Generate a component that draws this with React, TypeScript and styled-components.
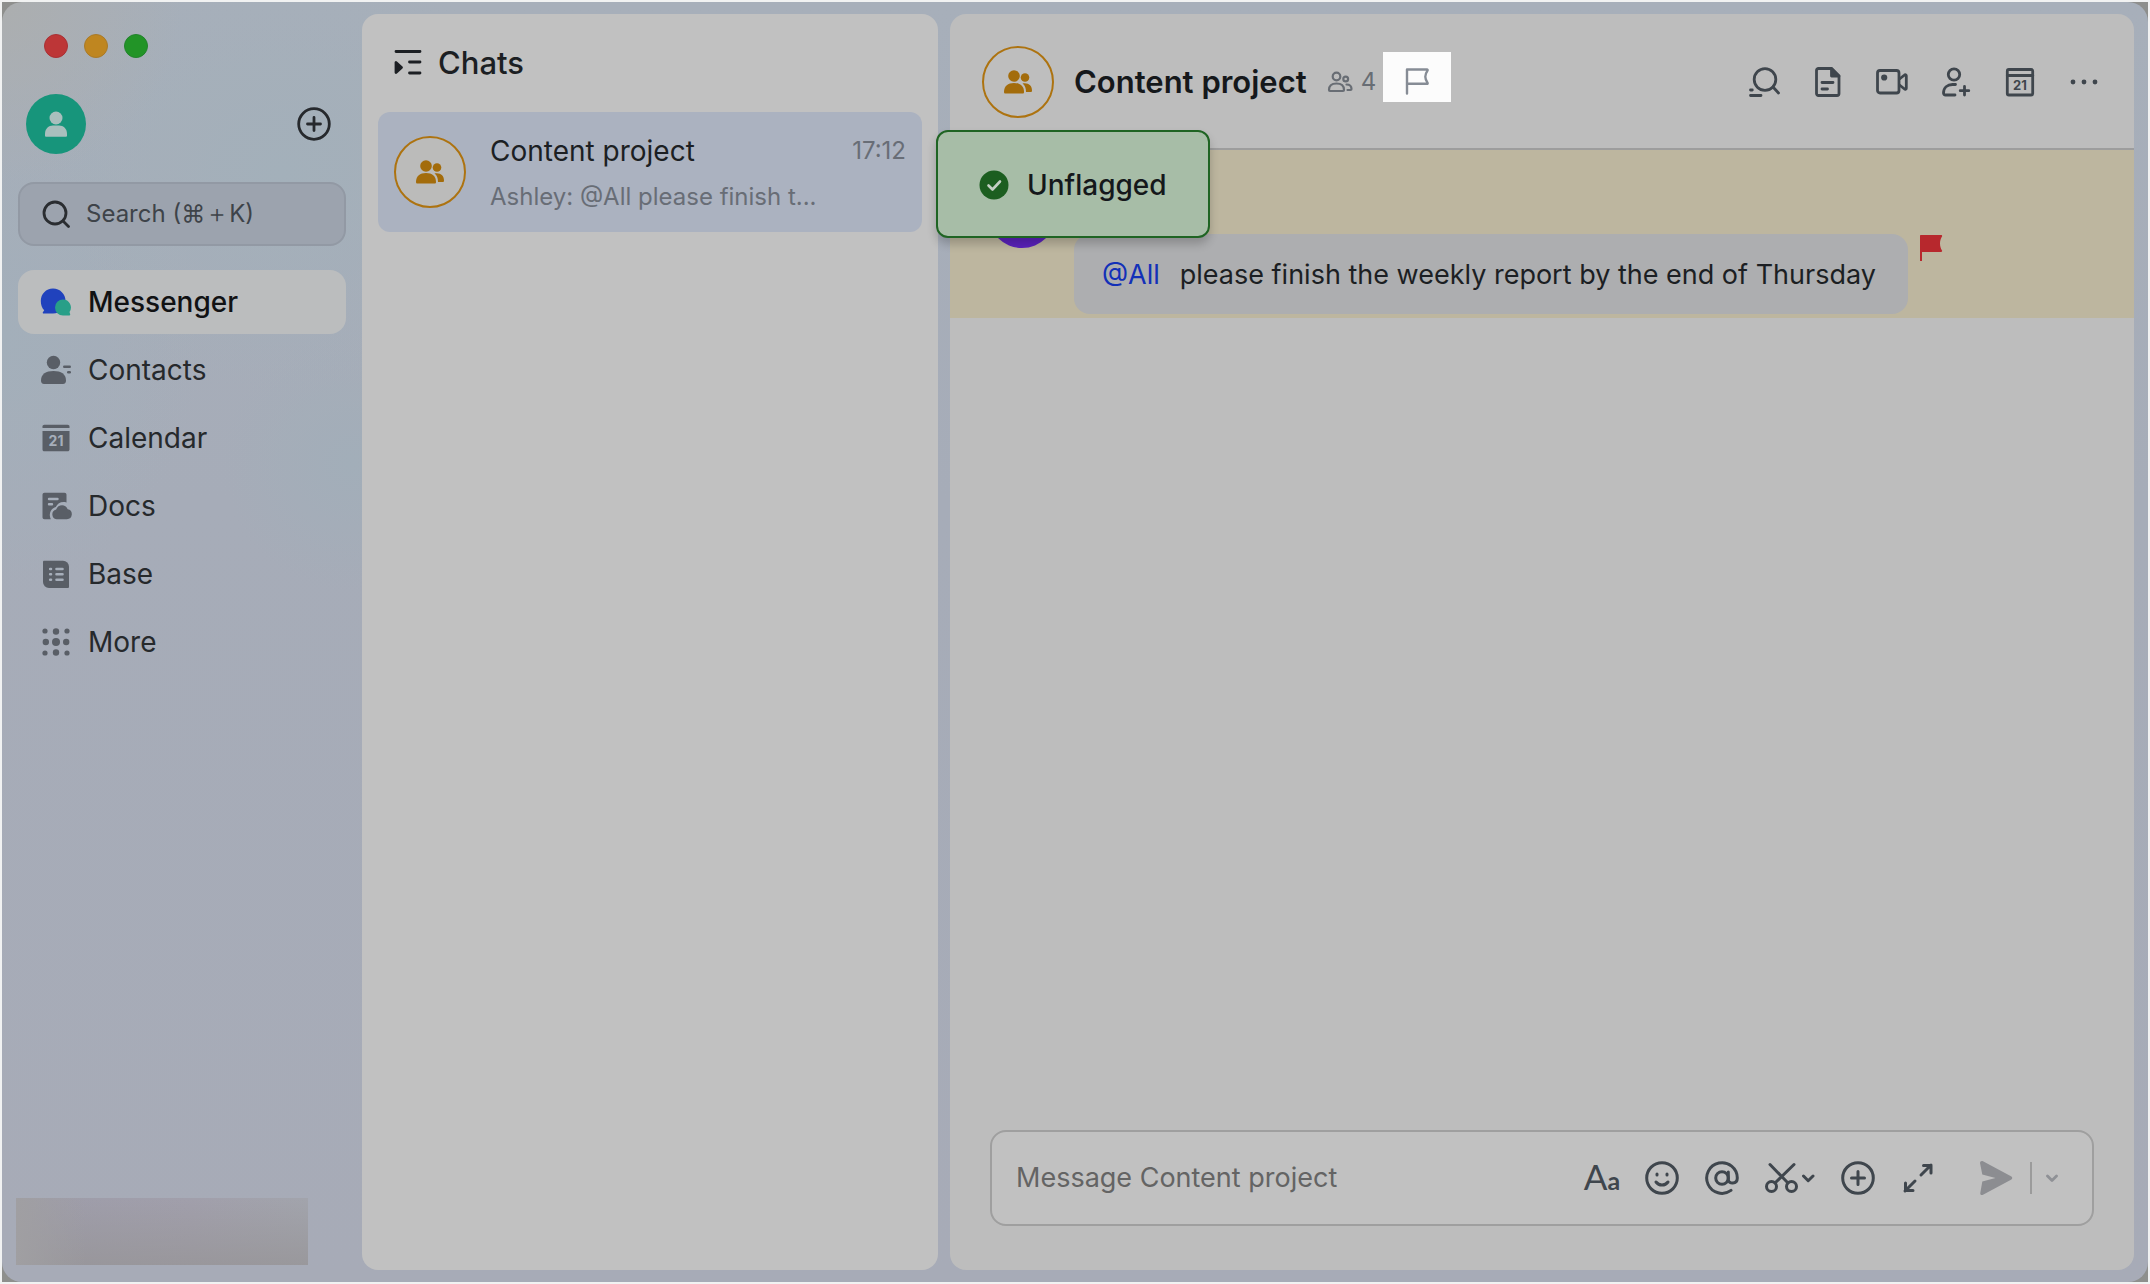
import React from "react";
import styled, { createGlobalStyle, css } from "styled-components";

const GlobalStyle = createGlobalStyle`
  *, *::before, *::after { box-sizing: border-box; }
  body {
    margin: 0;
    background: #f1f2f2;
    font-family: Inter, "Liberation Sans", "DejaVu Sans", sans-serif;
    color: #1c1f23;
  }
  button, input { font: inherit; color: inherit; }
  h1, h2, p { margin: 0; }
`;

const Page = styled.div`
  height: 100vh;
  padding: 2px;
  display: grid;
`;

const Backdrop = styled.div`
  background: #8e8f8d;
  display: grid;
  min-height: 0;
`;

const AppWindow = styled.div`
  display: grid;
  grid-template-columns: 360px 576px minmax(0, 1fr);
  min-height: 0;
  overflow: hidden;
  border-radius: 20px;
  padding: 12px 14px 12px 0;
  background:
    radial-gradient(circle at 0 0, rgba(172, 174, 174, 0.9), transparent 180px),
    radial-gradient(ellipse 260px 220px at 280px 170px, #a3b0ba, transparent),
    radial-gradient(ellipse 200px 260px at 0 330px, #a3afba, transparent),
    radial-gradient(ellipse 130px 130px at 350px 460px, #a2aeb9, transparent),
    linear-gradient(180deg, #a7afba 0, #a6acb8 500px, #a7abb7 100%);
`;

const Sidebar = styled.aside`
  display: flex;
  flex-direction: column;
  padding: 20px 16px 5px;
  min-height: 0;
`;

const TrafficLights = styled.div`
  display: flex;
  gap: 16px;
  padding-left: 26px;
`;

const Light = styled.span<{ $color: string; $ring: string }>`
  width: 24px;
  height: 24px;
  border-radius: 50%;
  background: ${(p) => p.$color};
  border: 1px solid ${(p) => p.$ring};
`;

const ProfileRow = styled.div`
  display: flex;
  align-items: center;
  justify-content: space-between;
  margin-top: 36px;
  padding: 0 14px 0 8px;
`;

const plainButton = css`
  display: inline-flex;
  align-items: center;
  justify-content: center;
  padding: 0;
  border: 0;
  background: none;
  cursor: pointer;
`;

const IconButton = styled.button<{ $w?: number; $h?: number; $tone?: string }>`
  ${plainButton}
  flex: none;
  width: ${(p) => p.$w ?? 32}px;
  height: ${(p) => p.$h ?? p.$w ?? 32}px;
  color: ${(p) => p.$tone ?? "#3f464d"};
`;

const ProfileButton = styled.button`
  ${plainButton}
  width: 60px;
  height: 60px;
  border-radius: 50%;
  background: #17957b;
  color: #a9bfbd;
`;

const SearchBox = styled.label`
  display: flex;
  align-items: center;
  gap: 16px;
  height: 64px;
  margin-top: 28px;
  padding: 0 22px;
  border: 2px solid #9299a4;
  border-radius: 16px;
  background: #9ca3ae;
  color: #2a2d31;
`;

const SearchInput = styled.input`
  flex: 1;
  min-width: 0;
  padding: 0;
  border: 0;
  outline: 0;
  background: none;
  font-size: 24px;
  line-height: 32px;
  &::placeholder { color: #3e4349; opacity: 1; }
`;

const Nav = styled.nav`
  display: flex;
  flex-direction: column;
  gap: 4px;
  margin-top: 24px;
`;

const NavLink = styled.a<{ $active?: boolean }>`
  display: flex;
  align-items: center;
  gap: 16px;
  height: 64px;
  padding: 0 22px;
  border-radius: 16px;
  text-decoration: none;
  font-size: 28px;
  line-height: 36px;
  font-weight: ${(p) => (p.$active ? 500 : 400)};
  color: ${(p) => (p.$active ? "#111214" : "#26292c")};
  background: ${(p) => (p.$active ? "#bbbdbe" : "transparent")};
  svg { flex: none; color: #595e66; }
`;

const AccountStrip = styled.div`
  width: 292px;
  height: 67px;
  margin: auto 0 0 -2px;
  background:
    linear-gradient(90deg, #a09fa2 0, transparent 70px),
    linear-gradient(0deg, rgba(151, 149, 152, 0.8), transparent 66px),
    linear-gradient(90deg, #9d9ca9, #a19fab 60%, #a2a4ac);
`;

const panel = css`
  display: flex;
  flex-direction: column;
  min-width: 0;
  min-height: 0;
  border-radius: 16px;
`;

const ChatsPanel = styled.section`
  ${panel}
  background: #c1c1c1;
  padding: 0 16px;
`;

const ChatsHeader = styled.header`
  display: flex;
  align-items: center;
  gap: 14px;
  height: 98px;
  padding-left: 14px;
`;

const ChatsTitle = styled.h2`
  font-size: 31px;
  line-height: 40px;
  font-weight: 500;
`;

const ChatItem = styled.a`
  display: flex;
  align-items: center;
  gap: 24px;
  height: 120px;
  padding: 0 16px;
  border-radius: 12px;
  background: #abb2c0;
  color: inherit;
  text-decoration: none;
`;

const GroupAvatar = styled.span<{ $fill: string }>`
  display: inline-flex;
  align-items: center;
  justify-content: center;
  flex: none;
  width: 72px;
  height: 72px;
  border: 2px solid #ad7310;
  border-radius: 50%;
  background: ${(p) => p.$fill};
  color: #a36c0b;
`;

const ChatText = styled.div`
  flex: 1;
  min-width: 0;
  display: flex;
  flex-direction: column;
  gap: 12px;
  padding-top: 2px;
`;

const ChatTop = styled.div`
  display: flex;
  align-items: center;
  justify-content: space-between;
`;

const ChatName = styled.span`
  font-size: 28px;
  line-height: 36px;
`;

const ChatTime = styled.time`
  font-size: 24px;
  line-height: 32px;
  color: #686d76;
`;

const ChatPreview = styled.p`
  font-size: 24px;
  line-height: 32px;
  color: #686d76;
  white-space: nowrap;
`;

const Conversation = styled.main`
  ${panel}
  position: relative;
  margin-left: 12px;
  background: #bdbdbd;
`;

const ConversationHeader = styled.header`
  display: flex;
  align-items: center;
  height: 136px;
  padding: 2px 34px 0 32px;
  border-bottom: 2px solid #9d9d9d;
`;

const ConversationTitle = styled.h1`
  margin-left: 20px;
  font-size: 31px;
  line-height: 40px;
  font-weight: 600;
  color: #15181b;
`;

const Members = styled.button`
  ${plainButton}
  gap: 8px;
  margin-left: 20px;
  font-size: 24px;
  line-height: 32px;
  color: #686d74;
`;

const FlagButton = styled.button`
  ${plainButton}
  width: 68px;
  height: 50px;
  margin: 0 0 10px 7px;
  padding-top: 8px;
  background: #fcfcfc;
  color: #868c95;
`;

const HeaderActions = styled.div`
  display: flex;
  gap: 32px;
  margin-left: auto;
`;

const FlaggedMessage = styled.article`
  display: flex;
  align-items: flex-start;
  height: 168px;
  padding: 30px 38px 4px;
  background: #bdb69f;
`;

const SenderAvatar = styled.span`
  flex: none;
  width: 68px;
  height: 68px;
  border-radius: 50%;
  background: #5a22bb;
`;

const Bubble = styled.p`
  align-self: flex-end;
  margin-left: 18px;
  padding: 21px 32px 19px 28px;
  border-radius: 16px;
  background: #adaeb0;
  font-size: 27px;
  line-height: 40px;
`;

const Mention = styled.a`
  margin-right: 20px;
  color: #1230b8;
  text-decoration: none;
`;

const MessageFlag = styled.span`
  margin: 54px 0 0 10px;
  color: #b7282d;
`;

const Composer = styled.form`
  display: flex;
  align-items: center;
  height: 96px;
  margin: auto 40px 44px;
  padding: 0 34px 0 24px;
  border: 2px solid #9f9f9f;
  border-radius: 16px;
  background: #c1c1c1;
`;

const MessageInput = styled.input`
  flex: 1;
  min-width: 0;
  padding: 0;
  border: 0;
  outline: 0;
  background: none;
  font-size: 27px;
  line-height: 36px;
  &::placeholder { color: #646464; opacity: 1; }
`;

const ComposerTools = styled.div`
  display: flex;
  align-items: center;
  gap: 24px;
  svg { stroke-width: 3px; }
`;

const Formatting = styled.span`
  font-family: Lato, "Liberation Sans", sans-serif;
  font-size: 35px;
  line-height: 36px;
  small { font-size: 25px; font-weight: 700; }
`;

const SendGroup = styled.div`
  display: flex;
  align-items: center;
  gap: 14px;
  margin-left: 44px;
`;

const Divider = styled.span`
  width: 2px;
  height: 32px;
  background: #9b9b9b;
`;

const Toast = styled.div`
  position: absolute;
  top: 116px;
  left: -14px;
  display: flex;
  align-items: center;
  gap: 18px;
  width: 274px;
  height: 108px;
  padding: 2px 40px 0 41px;
  border: 2px solid #1f6423;
  border-radius: 12px;
  background: #a7bda7;
  box-shadow: 0 6px 10px rgba(0, 0, 0, 0.2);
  color: #1c5e20;
`;

const ToastText = styled.span`
  font-size: 28px;
  line-height: 36px;
  font-weight: 500;
  color: #15181b;
`;

type IconProps = { w?: number; h?: number; children: React.ReactNode };

const Line = ({ w = 32, h, children }: IconProps) => (
  <svg width={w} height={h ?? w} viewBox={`0 0 ${w} ${h ?? w}`} fill="none" stroke="currentColor"
    strokeWidth="2.8" strokeLinecap="round" strokeLinejoin="round" aria-hidden="true">{children}</svg>
);
const Solid = ({ w = 32, h, children }: IconProps) => (
  <svg width={w} height={h ?? w} viewBox={`0 0 ${w} ${h ?? w}`} fill="currentColor" aria-hidden="true">{children}</svg>
);

const GroupIcon = () => (
  <Solid w={30} h={24}>
    <circle cx="11" cy="6" r="5.8" /><circle cx="22" cy="7.5" r="4.3" />
    <path d="M1 22c0-6 4-9 10-9s10 3 10 9c0 1-.5 1.500-1.500 1.500h-17C1.500 23.500 1 23 1 22z" />
    <path d="M19.500 13.500c6-1 9.500 2 9.500 7 0 1-.5 1.500-1.500 1.500h-4.500c0-4-1-6.500-3.500-8.500z" />
  </Solid>
);

const navItems = [
  {
    label: "Messenger",
    icon: (
      <Solid w={32}>
        <path fill="#2042bd" d="M13 2.500c7 0 12.500 5.500 12.500 12.500S20 27.500 13 27.500H4c-1.500 0-1.500-1-.8-1.800l1-1.400C2 22 .8 19 .8 15 .8 8 6 2.500 13 2.500z" />
        <path fill="#289f88" d="M23 13.500a8 8 0 0 1 6.500 12.500l.7 2.200c.2.800-.2 1.300-1 1.300H23a8 8 0 0 1 0-16z" />
      </Solid>
    ),
  },
  {
    label: "Contacts",
    icon: (
      <Solid w={32}>
        <circle cx="13.500" cy="8.500" r="6.700" />
        <path d="M1 26.500C1 20 6 17 13.500 17S26 20 26 26.500c0 2-1 3.500-3 3.500H4c-2 0-3-1.500-3-3.500z" />
        <rect x="23" y="11.500" width="8" height="2.600" rx="1.300" /><rect x="27" y="17" width="4" height="2.600" rx="1.300" />
      </Solid>
    ),
  },
  {
    label: "Calendar",
    icon: (
      <Solid w={32}>
        <path d="M2.500 6V4.500c0-1 .8-1.800 1.800-1.800h23.400c1 0 1.800.8 1.800 1.800V6z" />
        <path d="M2.500 9h27v18.500c0 1-.8 1.800-1.800 1.800H4.300c-1 0-1.800-.8-1.800-1.800z" />
        <text x="16" y="24" textAnchor="middle" fontSize="14" fontWeight="700" fill="#a6aeba">21</text>
      </Solid>
    ),
  },
  {
    label: "Docs",
    icon: (
      <Solid w={32}>
        <path d="M4.500 2.700h20c1.200 0 2 .8 2 2V12.500c-4.500-1.500-9 .5-10.700 4.500-5.300 1.500-7.500 7.500-5 12.300H4.500c-1.200 0-2-.8-2-2V4.700c0-1.200.8-2 2-2z" />
        <path d="M9 9h8.500M9 14.300h3" stroke="#a6aeba" strokeWidth="2.400" strokeLinecap="round" />
        <path d="M16.500 29.300a5 5 0 0 1-.3-9.800c1.500-5.500 9.500-6 11.500-.3a5.100 5.100 0 0 1-.8 10.100z" />
      </Solid>
    ),
  },
  {
    label: "Base",
    icon: (
      <Solid w={32}>
        <path d="M3 4c0-.8.500-1.300 1.300-1.300H23a6 6 0 0 1 6 6V28.700c0 .8-.5 1.300-1.300 1.300H9a6 6 0 0 1-6-6z" />
        <path d="M16.500 11h6M16.500 16.300h6M16.500 21.700h6M10.200 11h.8M10.200 16.300h.8M10.200 21.700h.8" stroke="#a6aeba" strokeWidth="2.600" strokeLinecap="round" />
      </Solid>
    ),
  },
  {
    label: "More",
    icon: (
      <Solid w={32}>
        <circle cx="5" cy="5" r="2.600" /><circle cx="16" cy="5.500" r="3.200" /><circle cx="27" cy="5" r="2.600" />
        <circle cx="5.800" cy="16" r="3.200" /><circle cx="16" cy="16" r="4" /><circle cx="26.200" cy="16" r="3.200" />
        <circle cx="5" cy="27" r="2.600" /><circle cx="16" cy="26.500" r="3.200" /><circle cx="27" cy="27" r="2.600" />
      </Solid>
    ),
  },
];

const headerActions = [
  {
    label: "Search in chat",
    icon: <Line><circle cx="17" cy="13.500" r="10.800" /><path d="M25 21l5.500 6M2.500 24h1.800M2.500 29.500h10.500" /></Line>,
  },
  {
    label: "Chat docs",
    icon: <Line><path d="M6.500 2.500h13l7.500 7.500v17.500a2 2 0 0 1-2 2H6.500a2 2 0 0 1-2-2v-23a2 2 0 0 1 2-2zM10 16.500h11M10 23h5.500" /><path fill="currentColor" d="M19.500 2.500V10H27z" /></Line>,
  },
  {
    label: "Start video meeting",
    icon: <Line><rect x="1.500" y="4.500" width="21.500" height="22.500" rx="2.500" /><path d="M23.500 13l5-4c.7-.6 1.800-.2 1.800.8v12.400c0 1-1.100 1.400-1.800.8l-5-4" /><circle cx="8.200" cy="11.500" r="1.700" fill="currentColor" /></Line>,
  },
  {
    label: "Add members",
    icon: <Line><circle cx="14" cy="8.500" r="5.700" /><path d="M15 29H5.500c-1.200 0-2-.8-2-2 0-5.500 4-8.500 9-8.500h3M24.500 20.500v8.500M20.200 24.700h8.600" /></Line>,
  },
  {
    label: "Calendar",
    icon: (
      <Line>
        <rect x="3.300" y="3.500" width="25.400" height="25.500" rx="1.500" /><path d="M3.300 9.500h25.400" />
        <text x="16" y="24" textAnchor="middle" fontSize="13" fontWeight="700" fill="currentColor" stroke="none">21</text>
      </Line>
    ),
  },
  {
    label: "More options",
    icon: <Solid><circle cx="5" cy="16" r="2.400" /><circle cx="16" cy="16" r="2.400" /><circle cx="27" cy="16" r="2.400" /></Solid>,
  },
];

export default function App() {
  return (
    <Page>
      <GlobalStyle />
      <Backdrop>
        <AppWindow>
          <Sidebar>
            <TrafficLights>
              <Light $color="#bd3637" $ring="#a93034" />
              <Light $color="#bf8620" $ring="#a97a28" />
              <Light $color="#229427" $ring="#22832c" />
            </TrafficLights>
            <ProfileRow>
              <ProfileButton aria-label="Profile">
                <Solid w={24} h={28}>
                  <circle cx="12" cy="8" r="6.500" />
                  <path d="M1 24c0-5.500 3.500-8.500 8-8.500h6c4.500 0 8 3 8 8.500v1.500c0 .8-.5 1.300-1.300 1.300H2.300c-.8 0-1.300-.5-1.300-1.300z" />
                </Solid>
              </ProfileButton>
              <IconButton $w={36} $tone="#26292d" aria-label="Create">
                <Line w={36}><circle cx="18" cy="18" r="15.300" /><path d="M18 11.500v13M11.500 18h13" /></Line>
              </IconButton>
            </ProfileRow>
            <SearchBox>
              <Line w={28}><circle cx="13" cy="13" r="11" /><path d="M21 21l5.500 5.500" /></Line>
              <SearchInput aria-label="Search" placeholder="Search (⌘＋K)" />
            </SearchBox>
            <Nav>
              {navItems.map((item, i) => (
                <NavLink key={item.label} href="#" $active={i === 0}>
                  {item.icon}
                  {item.label}
                </NavLink>
              ))}
            </Nav>
            <AccountStrip />
          </Sidebar>

          <ChatsPanel>
            <ChatsHeader>
              <IconButton $w={32} $tone="#1c1f23" aria-label="Show filters">
                <Line><path d="M4 4.500h24M17.500 15h10.500M17.500 26h10.500" /><path d="M4 15.500v10l5.500-5z" fill="currentColor" /></Line>
              </IconButton>
              <ChatsTitle>Chats</ChatsTitle>
            </ChatsHeader>
            <ChatItem href="#">
              <GroupAvatar $fill="#bbbbba"><GroupIcon /></GroupAvatar>
              <ChatText>
                <ChatTop>
                  <ChatName>Content project</ChatName>
                  <ChatTime>17:12</ChatTime>
                </ChatTop>
                <ChatPreview>Ashley: @All please finish t...</ChatPreview>
              </ChatText>
            </ChatItem>
          </ChatsPanel>

          <Conversation>
            <ConversationHeader>
              <GroupAvatar $fill="#bebebe"><GroupIcon /></GroupAvatar>
              <ConversationTitle>Content project</ConversationTitle>
              <Members aria-label="4 members">
                <svg width="26" height="22" viewBox="0 0 26 22" fill="none" stroke="currentColor" strokeWidth="2.200" strokeLinecap="round" strokeLinejoin="round" aria-hidden="true">
                  <circle cx="9.500" cy="5.500" r="3.800" /><circle cx="18.700" cy="8" r="2.400" />
                  <path d="M2 19c0-4.500 2.500-6.500 7.500-6.500S17 14.500 17 19c0 .7-.3 1-1 1H3c-.7 0-1-.3-1-1zM19.500 13.500c3.500 0 5 1.700 5 4.500 0 .6-.3 1-1 1h-3" />
                </svg>
                4
              </Members>
              <FlagButton aria-label="Flag chat">
                <svg width="26" height="30" viewBox="0 0 26 30" fill="none" stroke="currentColor" strokeWidth="2.400" strokeLinecap="round" strokeLinejoin="round" aria-hidden="true">
                  <path d="M3 27.500V3.500h20c.6 0 .8.400.6.900-1.200 1.800-2.300 3.600-2.300 6.300s1 4.200 2.300 6.200c.2.500 0 .900-.6.900H3" />
                </svg>
              </FlagButton>
              <HeaderActions>
                {headerActions.map((a) => (
                  <IconButton key={a.label} aria-label={a.label}>{a.icon}</IconButton>
                ))}
              </HeaderActions>
            </ConversationHeader>

            <FlaggedMessage>
              <SenderAvatar />
              <Bubble><Mention href="#">@All</Mention>please finish the weekly report by the end of Thursday</Bubble>
              <MessageFlag>
                <Solid w={26} h={30}><path d="M2 2C2 1.400 2.400 1 3 1h20c1 0 1.400.800 1 1.600-1.200 2-2 4-2 7s.8 4.900 2 6.900c.4.800 0 1.500-1 1.500H4V27H2z" /></Solid>
              </MessageFlag>
            </FlaggedMessage>

            <Composer>
              <MessageInput aria-label="Message" placeholder="Message Content project" />
              <ComposerTools>
                <IconButton type="button" $w={36} aria-label="Formatting">
                  <Formatting>A<small>a</small></Formatting>
                </IconButton>
                <IconButton type="button" $w={36} aria-label="Emoji">
                  <Line w={36}><circle cx="18" cy="18" r="15.300" /><path d="M12 22c3 4 9 4 12 0M13 14v1M23 14v1" /></Line>
                </IconButton>
                <IconButton type="button" $w={36} aria-label="Mention">
                  <Line w={36}><circle cx="18" cy="18" r="6.300" /><path d="M24.300 12v7.500c0 5 9 5 9-1.500A15.300 15.300 0 1 0 27 30.400" /></Line>
                </IconButton>
                <IconButton type="button" $w={52} $h={36} aria-label="Screenshot">
                  <Line w={52} h={36}><circle cx="7.500" cy="26.500" r="5" /><circle cx="27.500" cy="26.500" r="5" /><path d="M6 4.500L24 23M30 4.500L11 23M39.500 16l4.700 4.700L49 16" /></Line>
                </IconButton>
                <IconButton type="button" $w={36} aria-label="Attach">
                  <Line w={36}><circle cx="18" cy="18" r="15.300" /><path d="M18 11.500v13M11.500 18h13" /></Line>
                </IconButton>
                <IconButton type="button" $w={36} aria-label="Expand">
                  <Line w={36}><path d="M21 15L31 5M23.500 5.500h7.500v7.500M15 21L5 31M5.500 23v7.500h7.500" /></Line>
                </IconButton>
              </ComposerTools>
              <SendGroup>
                <IconButton $w={36} $tone="#8c8d91" aria-label="Send">
                  <Solid w={36}><path d="M0 3c0-1.800 1.500-2.500 3-1.800l28 15c1.700.9 1.700 2.700 0 3.600L3 34.800c-1.500.7-3 0-2.700-1.800l2-11.500L15.500 18 2.300 14.500z" /></Solid>
                </IconButton>
                <Divider />
                <IconButton type="button" $w={12} $h={32} $tone="#8f9196" aria-label="Send options">
                  <Line w={12} h={32}><path d="M1.500 14l4.500 4.500 4.500-4.500" /></Line>
                </IconButton>
              </SendGroup>
            </Composer>

            <Toast role="status">
              <Solid w={30}>
                <circle cx="15" cy="15" r="14.500" />
                <path d="M9.500 15.500l4 4 7.500-8" fill="none" stroke="#c3cfc3" strokeWidth="2.600" strokeLinecap="round" strokeLinejoin="round" />
              </Solid>
              <ToastText>Unflagged</ToastText>
            </Toast>
          </Conversation>
        </AppWindow>
      </Backdrop>
    </Page>
  );
}
